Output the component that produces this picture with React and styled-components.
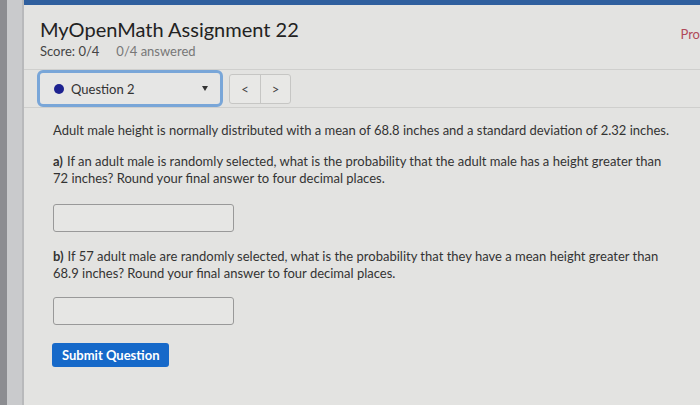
import React from 'react';
import styled, { createGlobalStyle } from 'styled-components';

const GlobalStyle = createGlobalStyle`
  html, body {
    margin: 0;
    padding: 0;
    width: 700px;
    height: 405px;
    overflow: hidden;
    background: #e2e2e0;
  }
  * {
    box-sizing: border-box;
  }
`;

const Screen = styled.div`
  display: flex;
  width: 700px;
  height: 405px;
  font-family: Lato, 'Open Sans', sans-serif;
  color: #333;
`;

const Bezel = styled.div`
  width: 24px;
  flex: none;
  background: linear-gradient(to right, #8c8d91 0 7px, #c9cacc 7px 22px, #b8b9bb 22px);
`;

const Main = styled.div`
  flex: 1;
  display: flex;
  flex-direction: column;
  border-top: 5px solid #2f5f9e;
  background: #e3e3e1;
  overflow: hidden;
`;

const Header = styled.div`
  display: flex;
  justify-content: space-between;
  align-items: flex-start;
  padding: 11px 0 0 16px;
  height: 64px;
`;

const Title = styled.h1`
  margin: 0;
  font-size: 20px;
  font-weight: 400;
  color: #222;
  line-height: 26px;
`;

const Stats = styled.div`
  display: flex;
  gap: 17px;
  font-size: 13px;
  margin-top: 1px;
  color: #444;
`;

const Muted = styled.span`
  color: #777;
`;

const ProfileLink = styled.span`
  font-size: 13px;
  color: #b04a5a;
  margin-top: 10px;
  white-space: nowrap;
`;

const Toolbar = styled.div`
  display: flex;
  align-items: center;
  gap: 6px;
  height: 39px;
  border-top: 1px solid #cfcfcd;
  border-bottom: 1px solid #cfcfcd;
  padding-left: 13px;
`;

const QuestionSelect = styled.div`
  width: 186px;
  height: 37px;
  display: flex;
  align-items: center;
  padding: 0 12px 0 14px;
  border: 3px solid #79a6d8;
  border-radius: 6px;
  background: #e6e6e5;
  font-size: 13px;
  color: #333;
`;

const Dot = styled.span`
  width: 10px;
  height: 10px;
  border-radius: 50%;
  background: #1d2290;
  margin-right: 7px;
`;

const Caret = styled.span`
  margin-left: auto;
  width: 0;
  height: 0;
  border-left: 3.5px solid transparent;
  border-right: 3.5px solid transparent;
  border-top: 5px solid #333;
`;

const NavGroup = styled.div`
  display: flex;
  height: 30px;
  border: 1px solid #c6c6c4;
  border-radius: 3px;
  background: #e8e8e6;
`;

const NavButton = styled.div`
  width: 30px;
  display: flex;
  align-items: center;
  justify-content: center;
  font-size: 13px;
  color: #444;
  & + & {
    border-left: 1px solid #c6c6c4;
  }
`;

const Body = styled.div`
  display: flex;
  flex-direction: column;
  padding: 14px 30px 0 29px;
  font-size: 13px;
  line-height: 17px;
  color: #333;
`;

const Para = styled.p`
  margin: 0 0 ${(p) => p.$gap ?? 0}px 0;
`;

const Label = styled.b`
  font-weight: 700;
  margin-right: 4px;
`;

const AnswerBox = styled.div`
  width: 181px;
  height: 28px;
  border: 1px solid #999;
  border-radius: 3px;
  background: #e6e6e4;
  margin: ${(p) => p.$before ?? 3}px 0 ${(p) => p.$after ?? 15}px 0;
`;

const SubmitButton = styled.div`
  align-self: flex-start;
  padding: 0 10px;
  height: 24px;
  line-height: 24px;
  background: #1669c9;
  color: #fff;
  font-weight: 700;
  font-size: 13px;
  border-radius: 3px;
  margin-left: -1px;
`;

export default function App() {
  return (
    <>
      <GlobalStyle />
      <Screen>
        <Bezel />
        <Main>
          <Header>
            <div>
              <Title>MyOpenMath Assignment 22</Title>
              <Stats>
                <span>Score: 0/4</span>
                <Muted>0/4 answered</Muted>
              </Stats>
            </div>
            <ProfileLink>Pro</ProfileLink>
          </Header>
          <Toolbar>
            <QuestionSelect>
              <Dot />
              Question 2
              <Caret />
            </QuestionSelect>
            <NavGroup>
              <NavButton>&lt;</NavButton>
              <NavButton>&gt;</NavButton>
            </NavGroup>
          </Toolbar>
          <Body>
            <Para $gap={14}>
              Adult male height is normally distributed with a mean of 68.8 inches and a
              standard deviation of 2.32 inches.
            </Para>
            <Para>
              <Label>a)</Label>If an adult male is randomly selected, what is the probability
              that the adult male has a height greater than 72 inches? Round your final answer
              to four decimal places.
            </Para>
            <AnswerBox $before={17} $after={16} />
            <Para>
              <Label>b)</Label>If 57 adult male are randomly selected, what is the probability
              that they have a mean height greater than 68.9 inches? Round your final answer to
              four decimal places.
            </Para>
            <AnswerBox $before={15} $after={18} />
            <SubmitButton>Submit Question</SubmitButton>
          </Body>
        </Main>
      </Screen>
    </>
  );
}
